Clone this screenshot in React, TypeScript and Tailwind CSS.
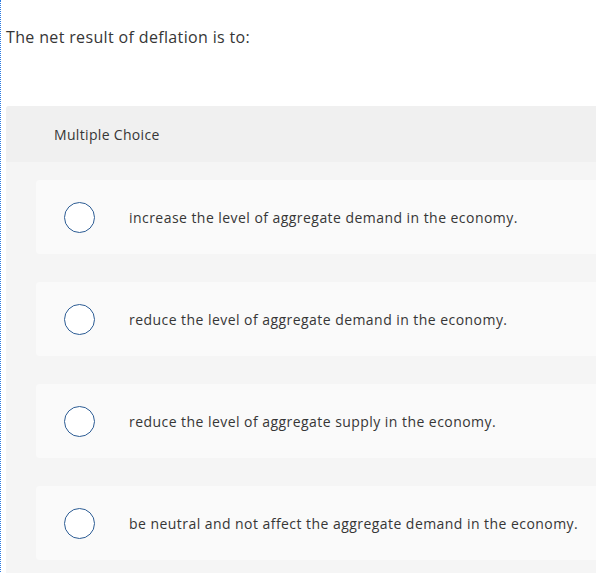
const options = [
  "increase the level of aggregate demand in the economy.",
  "reduce the level of aggregate demand in the economy.",
  "reduce the level of aggregate supply in the economy.",
  "be neutral and not affect the aggregate demand in the economy.",
];

const App = () => {
  return (
    <div
      className="min-h-[573px] w-[596px] bg-white border-l-[1.5px] border-dotted border-[#2a7ae2] overflow-hidden text-[#363636]"
      style={{ fontFamily: "'Open Sans', Arial, sans-serif" }}
    >
      <p className="pl-[5px] pt-[27px] text-[16px] leading-[20px] tracking-[0.35px]">
        The net result of deflation is to:
      </p>

      <div className="ml-[5px] mt-[59px] rounded-tl-[3px] bg-[#f5f5f5] pb-[14px]">
        <div className="h-[56px] bg-[#f0f0f0] pl-[48px] flex items-center rounded-tl-[3px]">
          <span className="text-[14px] tracking-[0.33px]">Multiple Choice</span>
        </div>

        <ul className="pl-[30px] pt-[18px] flex flex-col gap-[28px]">
          {options.map((opt, i) => (
            <li
              key={i}
              className="h-[74px] bg-[#fafafa] rounded-l-[4px] flex items-center"
            >
              <span className="ml-[28px] w-[31px] h-[31px] rounded-full border-[1.5px] border-[#2c5c94] bg-white shrink-0" />
              <span className="ml-[34px] text-[14px] tracking-[0.45px]">{opt}</span>
            </li>
          ))}
        </ul>
      </div>
    </div>
  );
};

export default App;
